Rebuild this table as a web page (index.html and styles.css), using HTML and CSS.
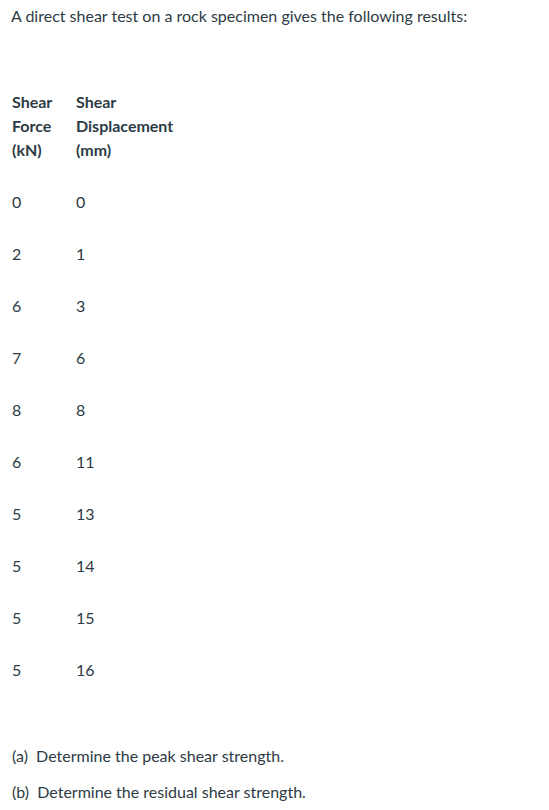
FILE: index.html
```html
<!DOCTYPE html>
<html lang="en">
<head>
<meta charset="utf-8">
<title>Direct shear test</title>
<link rel="stylesheet" href="styles.css">
</head>
<body>
<p class="intro">A direct shear test on a rock specimen gives the following results:</p>
<table class="data">
  <thead>
    <tr>
      <th class="col-force">Shear<br>Force<br>(kN)</th>
      <th>Shear<br>Displacement<br>(mm)</th>
    </tr>
  </thead>
  <tbody>
    <tr><td>0</td><td>0</td></tr>
    <tr><td>2</td><td>1</td></tr>
    <tr><td>6</td><td>3</td></tr>
    <tr><td>7</td><td>6</td></tr>
    <tr><td>8</td><td>8</td></tr>
    <tr><td>6</td><td>11</td></tr>
    <tr><td>5</td><td>13</td></tr>
    <tr><td>5</td><td>14</td></tr>
    <tr><td>5</td><td>15</td></tr>
    <tr><td>5</td><td>16</td></tr>
  </tbody>
</table>
<p class="part part-a">(a)&nbsp; Determine the peak shear strength.</p>
<p class="part">(b)&nbsp; Determine the residual shear strength.</p>
</body>
</html>
```
FILE: styles.css
```css
html, body {
  margin: 0;
  background: #ffffff;
}
body {
  padding: 4px 12px 0 11px;
  font-family: Lato, "Open Sans", sans-serif;
  font-size: 16px;
  line-height: 24px;
  color: #2d3b45;
}
p {
  margin: 0;
}
.intro {
  margin-bottom: 48px;
}
.data {
  border-collapse: collapse;
  border-spacing: 0;
  margin-left: 1px;
}
.data th,
.data td {
  padding: 14px 12px 14px 0;
  text-align: left;
  vertical-align: top;
  font-size: 16px;
  line-height: 24px;
}
.data th {
  font-weight: 700;
}
.data .col-force {
  width: 52px;
}
.part {
  margin-left: 1px;
  margin-top: 12px;
}
.part-a {
  margin-top: 48px;
}
```
